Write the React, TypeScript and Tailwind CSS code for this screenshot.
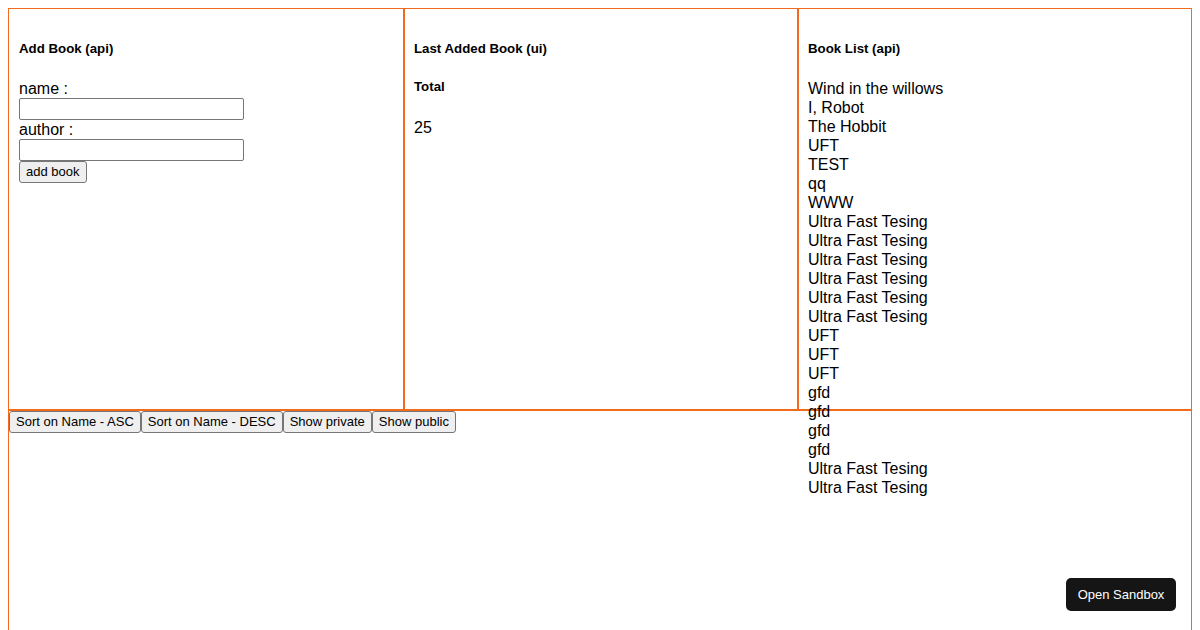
const books = [
  "Wind in the willows",
  "I, Robot",
  "The Hobbit",
  "UFT",
  "TEST",
  "qq",
  "WWW",
  "Ultra Fast Tesing",
  "Ultra Fast Tesing",
  "Ultra Fast Tesing",
  "Ultra Fast Tesing",
  "Ultra Fast Tesing",
  "Ultra Fast Tesing",
  "UFT",
  "UFT",
  "UFT",
  "gfd",
  "gfd",
  "gfd",
  "gfd",
  "Ultra Fast Tesing",
  "Ultra Fast Tesing",
];

const heading = "mt-[22px] mb-[23px] text-[13.28px] font-bold leading-[15px]";
const btn =
  "h-[22px] rounded-[3px] border border-[#767676] bg-[#efefef] px-[6px] text-[13px] leading-[18px] text-black";
const field =
  "block h-[22px] w-[225px] rounded-[2px] border border-[#767676] bg-white";

export default function App() {
  return (
    <div
      className="h-[630px] overflow-hidden bg-white text-[16px] leading-[19px] text-black"
      style={{ fontFamily: '"Liberation Sans", Arial, sans-serif' }}
    >
      <div className="m-2 h-[700px] border border-[#f26b1d]">
        <div className="flex h-[402px] border-b-2 border-[#f26b1d]">
          <div className="w-[396px] border-r-2 border-[#f26b1d] p-[10px]">
            <h5 className={heading}>Add Book (api)</h5>
            <div>name :</div>
            <input className={field} />
            <div>author :</div>
            <input className={field} />
            <button className={btn}>add book</button>
          </div>
          <div className="w-[394px] border-r-2 border-[#f26b1d] py-[10px] pr-[10px] pl-[9px]">
            <h5 className={heading}>Last Added Book (ui)</h5>
            <h5 className={heading}>Total</h5>
            <div className="pt-[1px]">25</div>
          </div>
          <div className="flex-1 py-[10px] pr-[10px] pl-[9px]">
            <h5 className={heading}>Book List (api)</h5>
            <div>
              {books.map((b, i) => (
                <div key={i}>{b}</div>
              ))}
            </div>
          </div>
        </div>
        <div className="flex">
          <button className={btn}>Sort on Name - ASC</button>
          <button className={btn}>Sort on Name - DESC</button>
          <button className={btn}>Show private</button>
          <button className={btn}>Show public</button>
        </div>
      </div>
      <button className="fixed bottom-[19px] right-[24px] h-[33px] w-[110px] rounded-[5px] bg-[#151515] text-[13px] text-white">
        Open Sandbox
      </button>
    </div>
  );
}
